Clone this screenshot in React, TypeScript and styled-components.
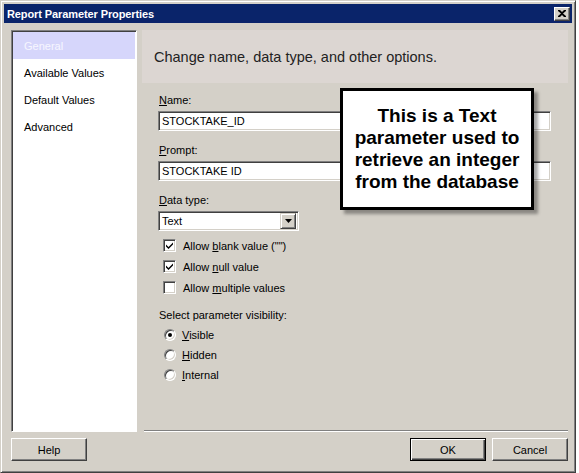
import React from "react";
import styled, { createGlobalStyle, css } from "styled-components";

const GlobalStyle = createGlobalStyle`
  html, body {
    margin: 0;
    padding: 0;
    background: #ffffff;
  }
  body {
    font-family: "Liberation Sans", Arial, sans-serif;
    font-size: 11px;
    color: #000;
  }
`;

const navItems = ["General", "Available Values", "Default Values", "Advanced"];

const checkOptions = [
  { before: "Allow ", key: "b", after: "lank value (\"\")", checked: true },
  { before: "Allow ", key: "n", after: "ull value", checked: true },
  { before: "Allow ", key: "m", after: "ultiple values", checked: false },
];

const radioOptions = [
  { key: "V", after: "isible", checked: true },
  { key: "H", after: "idden", checked: false },
  { key: "I", after: "nternal", checked: false },
];

export default function App() {
  return (
    <>
      <GlobalStyle />
      <Window>
        <TitleBar>
          <Title>Report Parameter Properties</Title>
          <CloseButton>
            <svg width="8" height="7" viewBox="0 0 8 7">
              <path d="M0 0h2l2 2 2-2h2v1L5 3.5 8 6v1H6L4 5 2 7H0V6l3-2.5L0 1z" fill="#000" />
            </svg>
          </CloseButton>
        </TitleBar>

        <Body>
          <Nav>
            {navItems.map((item, i) => (
              <NavItem key={item} $selected={i === 0}>
                {item}
              </NavItem>
            ))}
          </Nav>

          <Content>
            <Header>
              <HeaderText>Change name, data type, and other options.</HeaderText>
            </Header>

            <Form>
              <Label>
                <u>N</u>ame:
              </Label>
              <TextBox $width={393}>STOCKTAKE_ID</TextBox>

              <Label>
                <u>P</u>rompt:
              </Label>
              <TextBox $width={393}>STOCKTAKE ID</TextBox>

              <Label>
                <u>D</u>ata type:
              </Label>
              <Select>
                <SelectValue>Text</SelectValue>
                <DropButton>
                  <svg width="7" height="4" viewBox="0 0 7 4">
                    <path d="M0 0h7L3.5 4z" fill="#000" />
                  </svg>
                </DropButton>
              </Select>

              <CheckList>
                {checkOptions.map((opt) => (
                  <OptionRow key={opt.key}>
                    <CheckBox>
                      {opt.checked && (
                        <svg width="9" height="9" viewBox="0 0 9 9">
                          <path d="M1 3.5l2.5 2.5L8 1.5v2L3.5 8 1 5.5z" fill="#000" />
                        </svg>
                      )}
                    </CheckBox>
                    <OptionText>
                      {opt.before}
                      <u>{opt.key}</u>
                      {opt.after}
                    </OptionText>
                  </OptionRow>
                ))}
              </CheckList>

              <GroupLabel>Select parameter visibility:</GroupLabel>

              <RadioList>
                {radioOptions.map((opt) => (
                  <OptionRow key={opt.key}>
                    <Radio>{opt.checked && <RadioDot />}</Radio>
                    <RadioText>
                      <u>{opt.key}</u>
                      {opt.after}
                    </RadioText>
                  </OptionRow>
                ))}
              </RadioList>
            </Form>

            <Separator />
          </Content>
        </Body>

        <ButtonRow>
          <Button>Help</Button>
          <Spacer />
          <Button $default>OK</Button>
          <Button>Cancel</Button>
        </ButtonRow>

        <Callout>
          This is a Text
          <br />
          parameter used to
          <br />
          retrieve an integer
          <br />
          from the database
        </Callout>
      </Window>
    </>
  );
}

const Window = styled.div`
  position: relative;
  box-sizing: border-box;
  display: flex;
  flex-direction: column;
  width: 576px;
  height: 473px;
  padding: 3px 3px 0 3px;

  background: #d4d0c8;
  border: 1px solid;
  border-color: #d4d0c8 #404040 #404040 #d4d0c8;
  box-shadow: inset 1px 1px #ffffff, inset -1px -1px #808080;
`;

const TitleBar = styled.div`
  display: flex;
  align-items: center;
  justify-content: space-between;

  height: 19px;
  padding: 0 2px 0 3px;

  background: #0a246a;
`;

const Title = styled.span`
  color: #ffffff;
  font-weight: bold;
  font-size: 11px;
  letter-spacing: -0.1px;
`;

const CloseButton = styled.div`
  display: flex;
  align-items: center;
  justify-content: center;
  box-sizing: border-box;

  width: 16px;
  height: 14px;

  background: #d4d0c8;
  border: 1px solid;
  border-color: #ffffff #404040 #404040 #ffffff;
  box-shadow: inset -1px -1px #808080;
`;

const Body = styled.div`
  display: flex;
  gap: 5px;

  height: 402px;
  padding: 7px 4px 0 7px;
`;

const Nav = styled.div`
  box-sizing: border-box;
  display: flex;
  flex-direction: column;

  width: 126px;
  padding: 1px 1px;

  background: #ffffff;
  border: 1px solid;
  border-color: #808080 #ffffff #ffffff #808080;
  box-shadow: inset 1px 1px #404040;
`;

const NavItem = styled.div<{ $selected?: boolean }>`
  display: flex;
  align-items: center;

  height: 27px;
  padding-left: 11px;

  color: #000;

  ${({ $selected }) =>
    $selected &&
    css`
      background: #d6d6fb;
      color: #f6f6ff;
    `}
`;

const Content = styled.div`
  display: flex;
  flex: 1;
  flex-direction: column;
`;

const Header = styled.div`
  display: flex;
  align-items: center;

  height: 53px;
  padding-left: 12px;

  background: #dcd6d2;
`;

const HeaderText = styled.span`
  color: #222;
  font-size: 14.5px;
`;

const Form = styled.div`
  display: flex;
  flex: 1;
  flex-direction: column;
  align-items: flex-start;

  padding: 10px 0 0 16px;
`;

const Label = styled.div`
  height: 14px;
  margin-bottom: 4px;
  margin-left: 1px;

  line-height: 14px;
`;

const TextBox = styled.div<{ $width: number }>`
  box-sizing: border-box;
  display: flex;
  align-items: center;

  width: ${({ $width }) => $width}px;
  height: 20px;
  margin-bottom: 12px;
  padding-left: 3px;

  background: #ffffff;
  border: 1px solid;
  border-color: #808080 #ffffff #ffffff #808080;
  box-shadow: inset 1px 1px #404040, inset -1px -1px #d4d0c8;
`;

const Select = styled(TextBox).attrs({ $width: 141 })`
  justify-content: space-between;
  padding-right: 2px;
  margin-bottom: 8px;
`;

const SelectValue = styled.span``;

const DropButton = styled.div`
  box-sizing: border-box;
  display: flex;
  align-items: center;
  justify-content: center;

  width: 16px;
  height: 16px;

  background: #d4d0c8;
  border: 1px solid;
  border-color: #d4d0c8 #404040 #404040 #d4d0c8;
  box-shadow: inset 1px 1px #ffffff, inset -1px -1px #808080;
`;

const CheckList = styled.div`
  display: flex;
  flex-direction: column;
  gap: 8px;

  padding-left: 5px;
`;

const OptionRow = styled.div`
  display: flex;
  align-items: center;

  height: 13px;
`;

const CheckBox = styled.div`
  box-sizing: border-box;
  display: flex;
  align-items: center;
  justify-content: center;

  width: 13px;
  height: 13px;
  margin-right: 7px;

  background: #ffffff;
  border: 1px solid;
  border-color: #808080 #ffffff #ffffff #808080;
  box-shadow: inset 1px 1px #404040, inset -1px -1px #d4d0c8;
`;

const OptionText = styled.span``;

const GroupLabel = styled.div`
  margin: 15px 0 7px 1px;
`;

const RadioList = styled.div`
  display: flex;
  flex-direction: column;
  gap: 7px;

  padding-left: 6px;
`;

const Radio = styled.div`
  box-sizing: border-box;
  display: flex;
  align-items: center;
  justify-content: center;

  width: 12px;
  height: 12px;
  margin-right: 6px;

  background: #ffffff;
  border: 1px solid;
  border-color: #808080 #ffffff #ffffff #808080;
  border-radius: 50%;
  box-shadow: inset 1px 1px #404040, inset -1px -1px #d4d0c8;
`;

const RadioDot = styled.div`
  width: 4px;
  height: 4px;

  background: #000;
  border-radius: 50%;
`;

const RadioText = styled.span``;

const Separator = styled.div`
  height: 1px;
  margin-left: 2px;

  background: #808080;
  border-bottom: 1px solid #ffffff;
`;

const ButtonRow = styled.div`
  display: flex;
  gap: 6px;

  padding: 6px 4px 0 7px;
`;

const Spacer = styled.div`
  flex: 1;
`;

const Button = styled.div<{ $default?: boolean }>`
  box-sizing: border-box;
  display: flex;
  align-items: center;
  justify-content: center;

  width: 76px;
  height: 23px;

  background: #d4d0c8;
  border: 1px solid;
  border-color: #ffffff #404040 #404040 #ffffff;
  box-shadow: inset -1px -1px #808080;

  ${({ $default }) =>
    $default &&
    css`
      border-color: #000;
      box-shadow: inset 1px 1px #ffffff, inset -1px -1px #404040, inset -2px -2px #808080;
    `}
`;

const Callout = styled.div`
  position: absolute;
  left: 339px;
  top: 87px;
  box-sizing: border-box;
  display: flex;
  align-items: center;
  justify-content: center;

  width: 194px;
  height: 122px;

  background: #ffffff;
  border: 3px solid #000;
  box-shadow: 4px 4px 3px rgba(0, 0, 0, 0.35);

  color: #000;
  font-family: "Liberation Sans", Arial, sans-serif;
  font-size: 19px;
  font-weight: bold;
  line-height: 22px;
  text-align: center;
`;
